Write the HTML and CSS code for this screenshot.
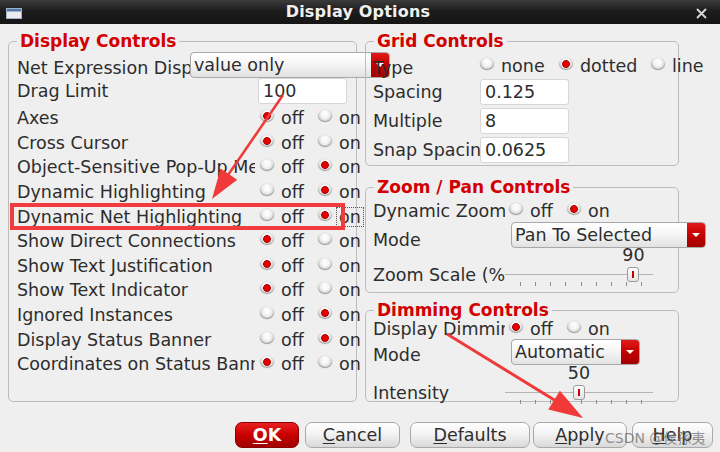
FILE: index.html
```html
<!DOCTYPE html>
<html>
<head>
<meta charset="utf-8">
<link rel="stylesheet" href="styles.css">
</head>
<body>
<div class="titlebar">
  <svg class="winicon" width="16" height="11" viewBox="0 0 16 11"><rect x="0.5" y="0.5" width="15" height="10" fill="#e9edf2" stroke="#9fb1c7"/><rect x="1" y="1" width="14" height="2.5" fill="#4f77ad"/></svg>
  <div class="title">Display Options</div>
  <svg class="close" width="11" height="11" viewBox="0 0 11 11"><path d="M1 1L10 10M10 1L1 10" stroke="#d8d8d8" stroke-width="1.8"/></svg>
</div>

<div class="main">
  <fieldset class="box left">
    <legend>Display Controls</legend>
    <div class="row first">
      <div class="lbl netexp">Net Expression Display</div>
      <div class="combo w200"><span class="ctext">value only</span><span class="cbtn"><i class="tri"></i></span></div>
    </div>
    <div class="row drag">
      <div class="lbl lw">Drag Limit</div>
      <div class="field dragf">100</div>
    </div>
    <div class="row rr"><div class="lbl lw">Axes</div><div class="opt o1"><i class="radio on"></i>off</div><div class="opt"><i class="radio"></i>on</div></div>
    <div class="row rr"><div class="lbl lw">Cross Cursor</div><div class="opt o1"><i class="radio on"></i>off</div><div class="opt"><i class="radio"></i>on</div></div>
    <div class="row rr"><div class="lbl lw">Object-Sensitive Pop-Up Menu</div><div class="opt o1"><i class="radio"></i>off</div><div class="opt"><i class="radio on"></i>on</div></div>
    <div class="row rr"><div class="lbl lw">Dynamic Highlighting</div><div class="opt o1"><i class="radio"></i>off</div><div class="opt"><i class="radio on"></i>on</div></div>
    <div class="row rr"><div class="lbl lw">Dynamic Net Highlighting</div><div class="opt o1"><i class="radio"></i>off</div><div class="opt"><i class="radio on"></i><span class="focus">on</span></div></div>
    <div class="row rr"><div class="lbl lw">Show Direct Connections</div><div class="opt o1"><i class="radio on"></i>off</div><div class="opt"><i class="radio"></i>on</div></div>
    <div class="row rr"><div class="lbl lw">Show Text Justification</div><div class="opt o1"><i class="radio on"></i>off</div><div class="opt"><i class="radio"></i>on</div></div>
    <div class="row rr"><div class="lbl lw">Show Text Indicator</div><div class="opt o1"><i class="radio on"></i>off</div><div class="opt"><i class="radio"></i>on</div></div>
    <div class="row rr"><div class="lbl lw">Ignored Instances</div><div class="opt o1"><i class="radio"></i>off</div><div class="opt"><i class="radio on"></i>on</div></div>
    <div class="row rr"><div class="lbl lw">Display Status Banner</div><div class="opt o1"><i class="radio"></i>off</div><div class="opt"><i class="radio on"></i>on</div></div>
    <div class="row rr"><div class="lbl lw">Coordinates on Status Banner</div><div class="opt o1"><i class="radio on"></i>off</div><div class="opt"><i class="radio"></i>on</div></div>
  </fieldset>

  <div class="rightcol">
    <fieldset class="box grid">
      <legend>Grid Controls</legend>
      <div class="row gtype">
        <div class="lbl gl typel">Type</div>
        <div class="opt gn"><i class="radio"></i>none</div>
        <div class="opt gd"><i class="radio on"></i>dotted</div>
        <div class="opt"><i class="radio"></i>line</div>
      </div>
      <div class="row grow"><div class="lbl gl">Spacing</div><div class="field">0.125</div></div>
      <div class="row grow"><div class="lbl gl">Multiple</div><div class="field">8</div></div>
      <div class="row grow"><div class="lbl gl">Snap Spacing</div><div class="field">0.0625</div></div>
    </fieldset>

    <fieldset class="box zoom">
      <legend>Zoom / Pan Controls</legend>
      <div class="row zdyn">
        <div class="lbl zl">Dynamic Zoom</div>
        <div class="opt zo"><i class="radio"></i>off</div>
        <div class="opt"><i class="radio on"></i>on</div>
      </div>
      <div class="row zmode">
        <div class="lbl ml">Mode</div>
        <div class="combo w195"><span class="ctext">Pan To Selected</span><span class="cbtn"><i class="tri"></i></span></div>
      </div>
      <div class="row valrow" style="--v:90">
        <div class="sp"></div>
        <div class="valbox"><span class="val">90</span></div>
      </div>
      <div class="row slrow" style="--v:90">
        <div class="lbl sl">Zoom Scale (%)</div>
        <div class="track"><span class="thumb"></span></div>
      </div>
    </fieldset>

    <fieldset class="box dim">
      <legend>Dimming Controls</legend>
      <div class="row ddyn">
        <div class="lbl zl">Display Dimming</div>
        <div class="opt zo"><i class="radio on"></i>off</div>
        <div class="opt"><i class="radio"></i>on</div>
      </div>
      <div class="row dmode">
        <div class="lbl ml">Mode</div>
        <div class="combo w129"><span class="ctext">Automatic</span><span class="cbtn"><i class="tri"></i></span></div>
      </div>
      <div class="row valrow" style="--v:50">
        <div class="sp"></div>
        <div class="valbox"><span class="val">50</span></div>
      </div>
      <div class="row slrow2" style="--v:50">
        <div class="lbl sl">Intensity</div>
        <div class="track"><span class="thumb"></span></div>
      </div>
    </fieldset>
  </div>
</div>

<div class="buttons">
  <div class="btn ok"><u>O</u>K</div>
  <div class="btn cancel"><u>C</u>ancel</div>
  <div class="btn defaults"><u>D</u>efaults</div>
  <div class="btn apply"><u>A</u>pply</div>
  <div class="btn help"><u>H</u>elp</div>
</div>

<div class="mark"></div>
<div class="watermark">CSDN @侯孫夷</div>

<svg class="arrows" width="720" height="452" viewBox="0 0 720 452">
  <line x1="283" y1="95" x2="226" y2="178" stroke="#f03a3a" stroke-width="2.5"/>
  <polygon points="212,199 237.2,179.8 220.6,168.6" fill="#f03a3a"/>
  <line x1="447" y1="334" x2="556" y2="401" stroke="#f03a3a" stroke-width="3"/>
  <polygon points="583,418 548.3,409.5 559.9,390.7" fill="#f03a3a"/>
</svg>
</body>
</html>
```

FILE: styles.css
```css
* { box-sizing: border-box; }
html, body { margin: 0; padding: 0; }
body {
  width: 720px;
  height: 452px;
  overflow: hidden;
  position: relative;
  background: #efefef;
  font-family: "DejaVu Sans", sans-serif;
  font-size: 17.5px;
  color: #2d2d2d;
}

.titlebar {
  height: 24px;
  display: grid;
  grid-template-columns: 1fr auto 1fr;
  align-items: center;
  background: linear-gradient(#3b3b3b, #1d1d1d 45%, #151515);
  color: #f0f0f0;
}
.winicon { display: block; margin-left: 6px; margin-top: 3px; }
.title { font-weight: bold; font-size: 16px; letter-spacing: 0.2px; line-height: 24px; margin-right: 4px; }
.close { display: block; justify-self: end; margin-right: 13px; margin-top: 3px; }

.main {
  display: grid;
  grid-template-columns: 349px 314px;
  column-gap: 8px;
  padding: 8px 0 0 8px;
  height: 378px;
}

.box {
  margin: 0;
  min-width: 0;
  border: 1px solid #bcbcbc;
  border-radius: 5px;
  padding: 0 8px 0 7px;
}
.box legend {
  padding: 0 3px;
  margin-left: 1px;
  font-weight: bold;
  font-size: 17px;
  line-height: 18px;
  color: #d20000;
}
.left { height: 370px; padding-left: 8px; }
.left legend { margin-left: 0; }

.row { display: flex; align-items: center; white-space: nowrap; }
.lbl { overflow: hidden; white-space: nowrap; flex: none; }

.first { height: 28px; margin-top: 2px; align-items: flex-start; }
.netexp { width: 173px; padding-top: 6px; }
.drag { height: 26px; }
.drag .lw { padding-bottom: 4px; }
.dragf { width: 84px; margin-top: -4px; margin-left: 3px; }
.rr { height: 24.6px; }
.lw { width: 238px; }

.opt { display: flex; align-items: center; flex: none; }
.o1 { width: 58px; margin-left: 5px; }

.radio {
  display: block;
  flex: none;
  width: 14px;
  height: 12px;
  margin-right: 7px;
  margin-bottom: 4px;
  border-radius: 50%;
  background: radial-gradient(ellipse at 50% 35%, #ffffff 0, #f6f6f6 35%, #d2d2d2 70%, #a6a6a6 100%);
  box-shadow: inset 0 -1px 1px rgba(0,0,0,0.28), 0 0 0 0.5px rgba(0,0,0,0.12);
}
.radio.on {
  background:
    radial-gradient(circle at 50% 50%, #ee0000 0, #d40000 3px, #b00000 3.5px, rgba(180,0,0,0) 4.3px),
    radial-gradient(ellipse at 50% 35%, #ffffff 0, #f6f6f6 35%, #d2d2d2 70%, #a6a6a6 100%);
}
.focus { border: 1px dotted #555; padding: 0 2px; margin-left: -3px; line-height: 18px; }

.field {
  width: 89px;
  height: 26px;
  background: #fff;
  border: 1px solid #d6d6d6;
  border-radius: 3px;
  padding-left: 4px;
  line-height: 24px;
  flex: none;
}

.combo {
  display: flex;
  flex: none;
  height: 26px;
  border: 1px solid #a8a8a8;
  border-radius: 4px;
  overflow: hidden;
  background: linear-gradient(#ffffff, #f6f6f6 45%, #e2e2e2);
}
.w200 { width: 200px; }
.w195 { width: 195px; }
.w129 { width: 129px; }
.ctext { flex: 1; padding-left: 3px; line-height: 24px; overflow: hidden; }
.cbtn {
  width: 18px;
  display: flex;
  align-items: center;
  justify-content: center;
  background: linear-gradient(#e41a1a, #c20000 50%, #a30000);
}
.tri { display: block; width: 0; height: 0; border-left: 4px solid transparent; border-right: 4px solid transparent; border-top: 4px solid #fff; }

.rightcol { display: flex; flex-direction: column; }
.grid { height: 134px; }
.zoom { height: 115px; margin-top: 12px; }
.dim { height: 101px; margin-top: 8px; }

.gtype { height: 22px; margin-top: 5px; }
.typel { position: relative; z-index: 3; padding-top: 3px; }
.gl { width: 107px; }
.gn { width: 79px; }
.gd { width: 92px; }
.grow { height: 29px; }

.zdyn { height: 22px; margin-top: 4px; }
.zl { width: 132px; }
.zo { width: 58px; margin-left: 4px; }
.zmode { height: 26px; }
.dmode { height: 28px; }
.ml { width: 138px; align-self: flex-end; }
.dmode .ml { padding-bottom: 1px; }
.zmode .ml { margin-bottom: -2px; }
.ddyn { height: 19px; }

.valrow { height: 16px; }
.sp { width: 132px; flex: none; }
.valbox { position: relative; width: 148px; height: 16px; }
.val {
  position: absolute;
  left: calc(6px + var(--v) * 1.36px);
  top: -2px;
  transform: translateX(-50%);
  line-height: 18px;
}
.slrow { height: 22px; }
.slrow2 { height: 22px; }
.sl { width: 132px; }
.track {
  position: relative;
  flex: none;
  width: 148px;
  height: 22px;
  background:
    linear-gradient(#b3b3b3, #b3b3b3) 0 10px / 100% 1px no-repeat,
    repeating-linear-gradient(to right, #8c8c8c 0 1px, transparent 1px 15.125px) 15px 18px / 122px 5px no-repeat;
}
.thumb {
  position: absolute;
  left: calc(var(--v) * 1.36px);
  top: 3px;
  width: 12px;
  height: 15px;
  border: 1px solid #9a9a9a;
  border-radius: 3px;
  background: linear-gradient(#ffffff, #e3e3e3);
}
.thumb::after {
  content: "";
  position: absolute;
  left: 4px;
  top: 3px;
  width: 2px;
  height: 7px;
  background: #c80000;
}

.buttons { display: flex; margin-top: 20px; padding-left: 235px; height: 26px; }
.btn {
  height: 26px;
  line-height: 24px;
  text-align: center;
  border: 1px solid #a9a9a9;
  border-radius: 7px;
  background: linear-gradient(#ffffff, #f3f3f3 45%, #d9d9d9);
  flex: none;
}
.btn u { text-decoration-thickness: 1px; text-underline-offset: 2px; }
.ok {
  width: 64px;
  color: #fff;
  font-weight: bold;
  border-color: #8e0000;
  background: linear-gradient(#e82020, #c80000 50%, #a00000);
}
.cancel { width: 95px; margin-left: 6px; }
.defaults { width: 120px; margin-left: 10px; }
.apply { width: 94px; margin-left: 3px; }
.help { width: 81px; margin-left: 5px; }

.mark {
  position: absolute;
  left: 10px;
  top: 203px;
  width: 335px;
  height: 27px;
  border: 4px solid #f03c3c;
}
.watermark {
  position: absolute;
  left: 605px;
  top: 427px;
  font-family: "DejaVu Sans", "Noto Sans CJK SC", sans-serif;
  font-size: 14px;
  color: rgba(110, 110, 110, 0.75);
}
.arrows { position: absolute; left: 0; top: 0; pointer-events: none; }
```
